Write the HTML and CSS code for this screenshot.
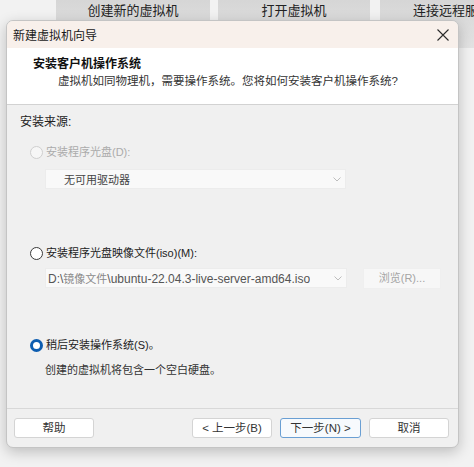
FILE: index.html
```html
<!DOCTYPE html>
<html lang="zh-CN">
<head>
<meta charset="utf-8">
<title>新建虚拟机向导</title>
<link rel="stylesheet" href="styles.css">
</head>
<body>
<div class="app">
  <div class="tabs">
    <div class="tab t1">创建新的虚拟机</div>
    <div class="tab t2">打开虚拟机</div>
    <div class="tab t3">连接远程服务器</div>
  </div>
  <div class="dialog">
    <div class="titlebar">
      <span class="title">新建虚拟机向导</span>
      <svg class="close" width="12" height="12" viewBox="0 0 12 12"><path d="M0.5 0.5L11.5 11.5M11.5 0.5L0.5 11.5" stroke="#2b2b2b" stroke-width="1.1" fill="none"/></svg>
    </div>
    <div class="header">
      <div class="h-title">安装客户机操作系统</div>
      <div class="h-sub">虚拟机如同物理机，需要操作系统。您将如何安装客户机操作系统?</div>
    </div>
    <div class="body">
      <div class="label">安装来源:</div>
      <div class="radio-row disabled r1"><span class="radio"></span><span>安装程序光盘(D):</span></div>
      <div class="select s1"><span>无可用驱动器</span><svg class="chev" width="8" height="5" viewBox="0 0 8 5"><path d="M0.5 0.5L4 4L7.5 0.5" stroke="#bdbdbd" fill="none"/></svg></div>
      <div class="radio-row r2"><span class="radio"></span><span>安装程序光盘映像文件(iso)(M):</span></div>
      <div class="combo-row">
        <div class="select s2"><span class="path">D:\<span class="cjk">镜像文件</span>\ubuntu-22.04.3-live-server-amd64.iso</span><svg class="chev" width="8" height="5" viewBox="0 0 8 5"><path d="M0.5 0.5L4 4L7.5 0.5" stroke="#bdbdbd" fill="none"/></svg></div>
        <div class="browse">浏览(R)...</div>
      </div>
      <div class="radio-row r3"><span class="radio checked"></span><span>稍后安装操作系统(S)。</span></div>
      <div class="desc">创建的虚拟机将包含一个空白硬盘。</div>
    </div>
    <div class="footer">
      <div class="btn">帮助</div>
      <div class="spacer"></div>
      <div class="btn">&lt; 上一步(B)</div>
      <div class="btn primary">下一步(N) &gt;</div>
      <div class="btn">取消</div>
    </div>
  </div>
</div>
</body>
</html>
```
FILE: styles.css
```css
* { box-sizing: border-box; }
html, body { margin: 0; padding: 0; }
body {
  width: 474px;
  height: 467px;
  overflow: hidden;
  background: #f2f2f2;
  font-family: "Liberation Sans", "Noto Sans CJK SC", sans-serif;
  font-size: 12px;
  color: #222;
}
.app { position: relative; width: 474px; height: 467px; }
.tabs { display: flex; height: 48px; padding-left: 56px; gap: 8px; }
.tab {
  flex: none;
  height: 48px;
  background: linear-gradient(#d6d6d6, #e3e3e3);
  font-family: "Noto Sans CJK SC", sans-serif;
  font-size: 13px;
  color: #222;
  text-align: center;
  line-height: 20px;
}
.t1 { width: 154px; }
.t2 { width: 152px; }
.t3 { width: 150px; margin-left: 2px; text-align: left; padding-left: 33px; white-space: nowrap; overflow: hidden; }

.dialog {
  position: absolute;
  left: 6px;
  top: 20px;
  width: 453px;
  height: 428px;
  border: 1px solid #c4c4c4;
  border-radius: 7px;
  overflow: hidden;
  background: #f0f0f0;
  box-shadow: 0 4px 14px rgba(0,0,0,0.22);
  display: flex;
  flex-direction: column;
}
.titlebar {
  height: 27px;
  background: #f8f0eb;
  display: flex;
  align-items: center;
  justify-content: space-between;
  padding: 0 9px 0 6px;
  flex: none;
}
.title { font-family: "Noto Sans CJK SC", sans-serif; font-size: 12px; color: #1a1a1a; }
.header {
  height: 57px;
  background: #fff;
  border-bottom: 1px solid #d2d2d2;
  padding-top: 8px;
  flex: none;
}
.h-title { font-weight: bold; padding-left: 26px; line-height: 16px; color: #111; font-size: 12px; }
.h-sub { padding-left: 51px; line-height: 16px; margin-top: 1px; color: #333; font-size: 11.5px; }
.body {
  flex: 1;
  padding: 9px 0 0 13px;
  border-bottom: 1px solid #d8d8d8;
  font-size: 11px;
}
.label { line-height: 16px; font-size: 12px; }
.radio-row { display: flex; align-items: center; gap: 3px; line-height: 16px; margin-left: 10px; white-space: nowrap; }
.radio {
  width: 13px; height: 13px; border-radius: 50%;
  border: 1px solid #3a3a3a; background: #fff; flex: none;
}
.disabled { color: #ababab; }
.disabled .radio { border-color: #cfcfcf; background: #f6f6f6; }
.radio.checked { border: 3.5px solid #0d5db0; background: #fff; }
.r1 { margin-top: 14px; }
.r2 { margin-top: 56px; }
.r3 { margin-top: 48px; }
.select {
  height: 20px;
  background: #f9f9f9;
  border: 1px solid #ececec;
  display: flex;
  align-items: center;
  justify-content: space-between;
  padding: 0 4px 0 2px;
  color: #444;
  white-space: nowrap;
  overflow: hidden;
}
.s1 { width: 301px; margin: 9px 0 0 25px; padding-left: 18px; font-size: 11px; }
.combo-row { display: flex; margin: 7px 0 0 25px; gap: 16px; }
.s2 { width: 302px; color: #555; font-size: 12px; flex: none; }
.path { overflow: hidden; }
.cjk { color: #8a8a8a; font-size: 11px; }
.browse {
  flex: none;
  width: 78px; height: 21px;
  background: #f7f7f7;
  border: 1px solid #efefef;
  color: #a5a5a5;
  text-align: center;
  line-height: 19px;
  font-size: 11px;
}
.desc { margin: 9px 0 0 25px; line-height: 16px; color: #333; }
.footer {
  height: 38px;
  flex: none;
  display: flex;
  align-items: center;
  padding: 0 9px 0 7px;
  gap: 8px;
}
.spacer { flex: 1; }
.btn {
  flex: none;
  width: 80px; height: 20px;
  background: #fff;
  border: 1px solid #d4d4d4;
  border-radius: 3px;
  text-align: center;
  line-height: 18px;
  color: #333;
  font-size: 11.5px;
  white-space: nowrap;
}
.btn.primary { border-color: #6a9fd3; background: #f7fafd; width: 81px; }
```
